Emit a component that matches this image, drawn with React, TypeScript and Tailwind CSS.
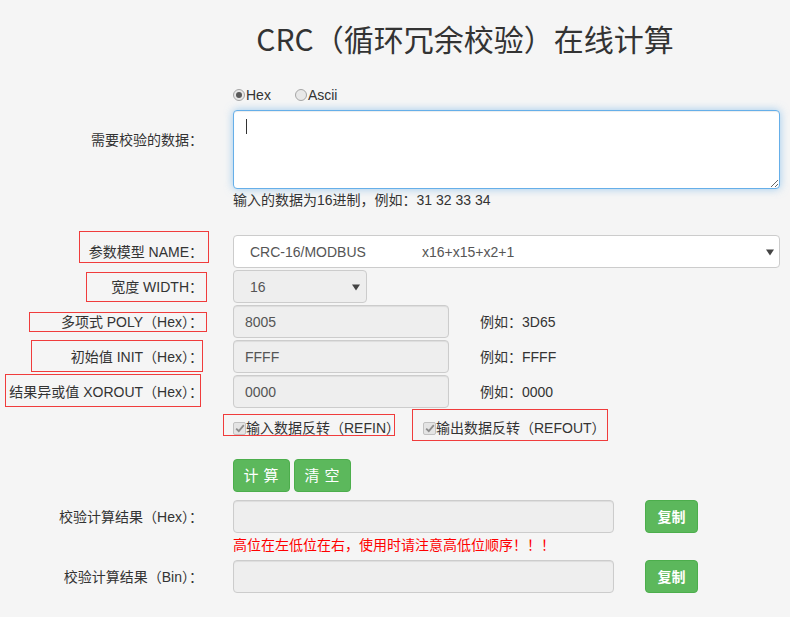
import React from "react";

const RED = "border border-[#f03c3c]";

// red annotation frame drawn over a label
const Mark = ({ className }: { className: string }) => (
  <span className={`pointer-events-none absolute ${RED} ${className}`} />
);

const Arrow = ({ className }: { className: string }) => (
  <svg
    className={`absolute ${className}`}
    width="8"
    height="7"
    viewBox="0 0 8 7"
  >
    <path d="M0 0.5h8L4 6.5z" fill="#444" />
  </svg>
);

const Radio = ({ checked }: { checked?: boolean }) => (
  <span className="flex h-[12px] w-[12px] items-center justify-center rounded-full border border-[#a6a6a6] bg-[#e8e8e8]">
    {checked && <span className="h-[6px] w-[6px] rounded-full bg-[#5a5a5a]" />}
  </span>
);

const Check = () => (
  <span className="flex h-[13px] w-[13px] items-center justify-center rounded-[2px] border border-[#c2c2c2] bg-[#e4e4e4]">
    <svg width="10" height="9" viewBox="0 0 10 9">
      <path
        d="M1.2 4.6 3.8 7.2 8.8 1.2"
        fill="none"
        stroke="#8c8c8c"
        strokeWidth="1.8"
      />
    </svg>
  </span>
);

const Label = ({ children }: { children: React.ReactNode }) => (
  <div className="w-[233px] shrink-0 pr-[30px] text-right">{children}</div>
);

const ReadOnly = ({
  value,
  className,
}: {
  value?: string;
  className: string;
}) => (
  <div
    className={`flex h-[33px] items-center rounded-[4px] border border-[#cccccc] bg-[#eeeeee] pl-[11px] text-[#555] shadow-[inset_0_1px_1px_rgba(0,0,0,0.075)] ${className}`}
  >
    {value}
  </div>
);

const GreenBtn = ({
  children,
  className,
}: {
  children: React.ReactNode;
  className: string;
}) => (
  <button
    className={`flex h-[33px] items-center justify-center rounded-[4px] border border-[#4cae4c] bg-[#5cb85c] text-white ${className}`}
  >
    {children}
  </button>
);

const params = [
  {
    label: "多项式 POLY（Hex）：",
    value: "8005",
    example: "例如：3D65",
    mark: "left-[29px] top-[7px] h-[20px] w-[178px]",
  },
  {
    label: "初始值 INIT（Hex）：",
    value: "FFFF",
    example: "例如：FFFF",
    mark: "left-[31px] top-0 h-[32px] w-[172px]",
  },
  {
    label: "结果异或值 XOROUT（Hex）：",
    value: "0000",
    example: "例如：0000",
    mark: "left-[5px] -top-px h-[33px] w-[196px]",
  },
];

export default function App() {
  return (
    <div className="min-h-[617px] w-full bg-[#f5f5f5] pb-[20px] font-['Liberation_Sans','Noto_Sans_CJK_SC',sans-serif] text-[14px] leading-[20px] text-[#333]">
      <h1 className="pl-[140px] pt-[19px] text-center font-['Noto_Sans_CJK_SC',sans-serif] text-[30px] leading-[38px] text-[#333]">
        CRC（循环冗余校验）在线计算
      </h1>

      {/* 数据输入 */}
      <div className="mt-[28px] flex">
        <Label>
          <div className="pt-[45px]">需要校验的数据：</div>
        </Label>
        <div className="flex-1 pr-[10px]">
          <div className="flex h-[20px] items-center">
            <Radio checked />
            <span className="ml-px">Hex</span>
            <span className="ml-[24px]" />
            <Radio />
            <span className="ml-px">Ascii</span>
          </div>
          <div className="relative mt-[5px]">
            <textarea
              className="block h-[79px] w-full rounded-[4px] border border-[#66afe9] bg-white shadow-[inset_0_1px_1px_rgba(0,0,0,0.075),0_0_8px_rgba(102,175,233,0.6)] outline-none"
              defaultValue=""
            />
            <span className="absolute left-[13px] top-[9px] h-[15px] w-px bg-[#333]" />
          </div>
          <div className="mt-px">输入的数据为16进制，例如：31 32 33 34</div>
        </div>
      </div>

      {/* 参数模型 */}
      <div className="relative mt-[25px] flex h-[33px] items-center">
        <Mark className="left-[79px] -top-[4px] h-[32px] w-[130px]" />
        <Label>参数模型 NAME：</Label>
        <div className="flex-1 pr-[10px]">
          <div className="relative flex h-[33px] items-center rounded-[4px] border border-[#cccccc] bg-white pl-[16px] text-[#555]">
            <span className="w-[172px]">CRC-16/MODBUS</span>
            <span>x16+x15+x2+1</span>
            <Arrow className="right-[5px] top-[13px]" />
          </div>
        </div>
      </div>

      <div className="relative mt-[2px] flex h-[33px] items-center">
        <Mark className="left-[86px] top-[2px] h-[30px] w-[121px]" />
        <Label>宽度 WIDTH：</Label>
        <div className="relative flex h-[33px] w-[134px] items-center rounded-[4px] border border-[#cccccc] bg-[#eeeeee] pl-[16px] text-[#555]">
          16
          <Arrow className="right-[6px] top-[13px]" />
        </div>
      </div>

      {params.map((p) => (
        <div key={p.label} className="relative mt-[2px] flex h-[33px] items-center">
          <Mark className={p.mark} />
          <Label>{p.label}</Label>
          <ReadOnly value={p.value} className="w-[216px]" />
          <span className="ml-[31px]">{p.example}</span>
        </div>
      ))}

      {/* 反转选项 */}
      <div className="mt-[9px] flex h-[22px] items-center pl-[233px]">
        <div className="relative flex items-center">
          <Mark className="-left-[10px] -top-[4px] h-[22px] w-[172px]" />
          <Check />
          <span>输入数据反转（REFIN）</span>
        </div>
        <div className="relative ml-[23px] flex items-center">
          <Mark className="-left-[11px] -top-[9px] h-[32px] w-[196px]" />
          <Check />
          <span>输出数据反转（REFOUT）</span>
        </div>
      </div>

      <div className="mt-[20px] flex gap-[4px] pl-[233px]">
        <GreenBtn className="w-[57px] pl-[4px] text-[15px] tracking-[5px]">计算</GreenBtn>
        <GreenBtn className="w-[57px] pl-[4px] text-[15px] tracking-[5px]">清空</GreenBtn>
      </div>

      {/* 结果 */}
      <div className="mt-[8px] flex h-[33px] items-center">
        <Label>校验计算结果（Hex）：</Label>
        <ReadOnly className="w-[381px]" />
        <GreenBtn className="ml-[31px] w-[53px] font-bold">复制</GreenBtn>
      </div>
      <div className="mt-[2px] pl-[233px] text-[#ff0000]">
        高位在左低位在右，使用时请注意高低位顺序！！！
      </div>
      <div className="mt-[5px] flex h-[33px] items-center">
        <Label>校验计算结果（Bin）：</Label>
        <ReadOnly className="w-[381px]" />
        <GreenBtn className="ml-[31px] w-[53px] font-bold">复制</GreenBtn>
      </div>
    </div>
  );
}
